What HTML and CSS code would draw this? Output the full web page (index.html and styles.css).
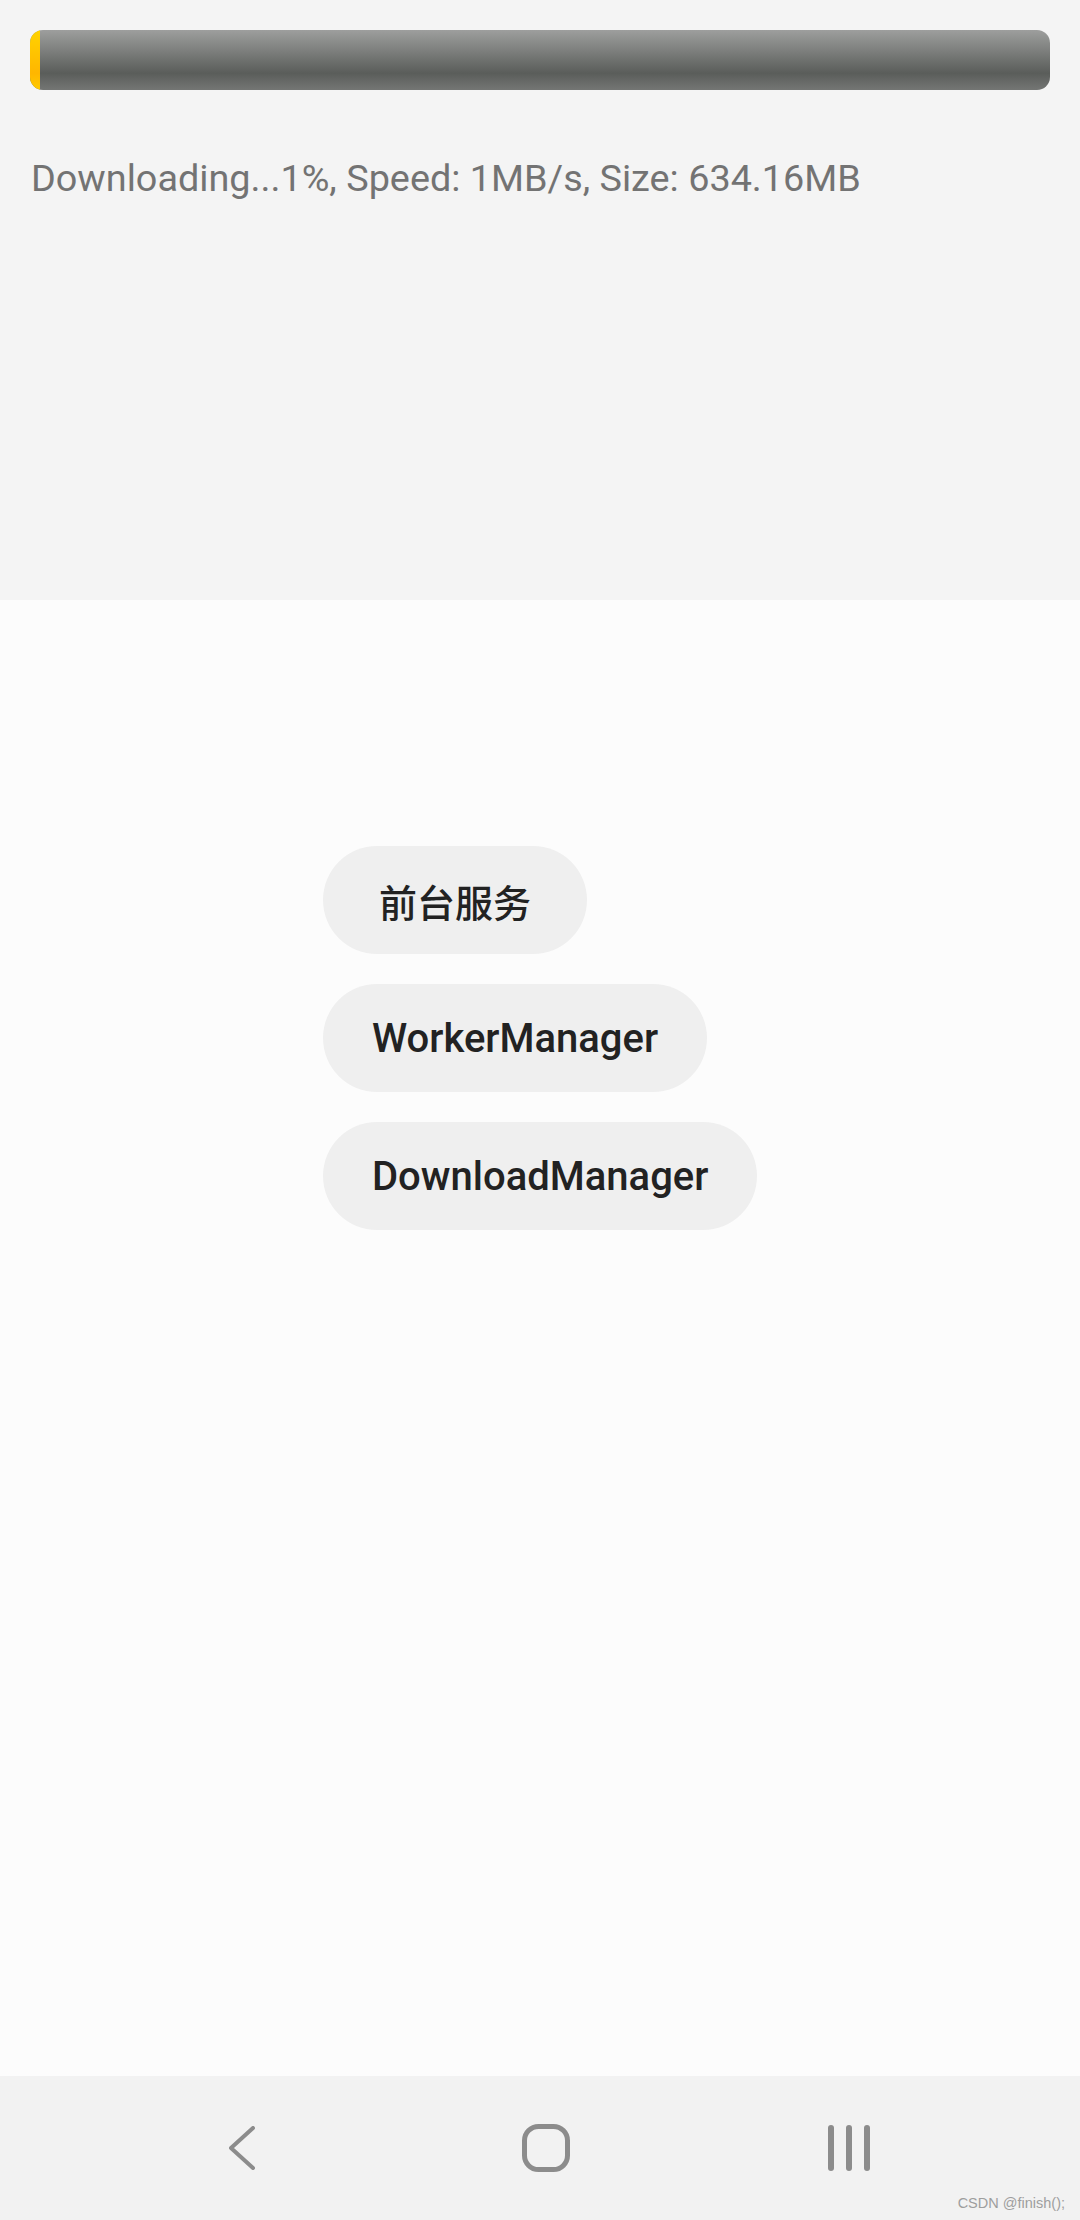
FILE: index.html
```html
<!DOCTYPE html>
<html lang="zh">
<head>
<meta charset="utf-8">
<title>Download</title>
<link rel="stylesheet" href="styles.css">
</head>
<body>
<div class="screen">
  <section class="top">
    <div class="progress"><div class="progress-fill" style="width:1%"></div></div>
    <p class="status">Downloading...1%, Speed: 1MB/s, Size: 634.16MB</p>
  </section>
  <main class="content">
    <div class="buttons">
      <button class="btn btn-cjk">前台服务</button>
      <button class="btn">WorkerManager</button>
      <button class="btn">DownloadManager</button>
    </div>
  </main>
  <nav class="navbar">
    <div class="nav-cell">
      <svg class="ic-back" width="28" height="44" viewBox="0 0 28 44"><polyline points="24,2 2,22 24,42" fill="none" stroke="#8c8c8c" stroke-width="4" stroke-linecap="round" stroke-linejoin="round"/></svg>
    </div>
    <div class="nav-cell">
      <svg class="ic-home" width="48" height="48" viewBox="0 0 48 48"><rect x="2.5" y="2.5" width="43" height="43" rx="14" fill="none" stroke="#8c8c8c" stroke-width="5"/></svg>
    </div>
    <div class="nav-cell">
      <svg class="ic-recents" width="42" height="46" viewBox="0 0 42 46"><rect x="0" y="0" width="6" height="46" rx="3" fill="#8c8c8c"/><rect x="18" y="0" width="6" height="46" rx="3" fill="#8c8c8c"/><rect x="36" y="0" width="6" height="46" rx="3" fill="#8c8c8c"/></svg>
    </div>
    <span class="watermark">CSDN @finish();</span>
  </nav>
</div>
</body>
</html>
```
FILE: styles.css
```css
html, body {
  margin: 0;
  padding: 0;
}
body {
  width: 1080px;
  height: 2220px;
  overflow: hidden;
  background: #fcfcfc;
  font-family: Roboto, "Noto Sans", "Noto Sans CJK SC", sans-serif;
}
.screen {
  width: 1080px;
  height: 2220px;
  display: flex;
  flex-direction: column;
}
.top {
  height: 600px;
  flex: none;
  box-sizing: border-box;
  background: #f4f4f4;
  padding: 30px 30px 0 30px;
}
.progress {
  height: 60px;
  border-radius: 13px;
  overflow: hidden;
  background: linear-gradient(to bottom, #9d9e9d 0%, #5a5d5a 72%, #747674 100%);
}
.progress-fill {
  height: 100%;
  background: linear-gradient(to bottom, #ffd300 0%, #ffb600 72%, #ffcb00 100%);
}
.status {
  margin: 66px 0 0 1px;
  font-family: Roboto, sans-serif;
  font-size: 37.8px;
  line-height: 44px;
  color: #737373;
  white-space: nowrap;
}
.content {
  flex: 1;
  padding: 246px 0 0 323px;
}
.buttons {
  display: flex;
  flex-direction: column;
  align-items: flex-start;
  gap: 30px;
}
.btn {
  height: 108px;
  min-width: 264px;
  box-sizing: border-box;
  padding: 0 49px;
  border: none;
  border-radius: 54px;
  background: #efefef;
  color: #222222;
  font-family: Roboto, "Noto Sans CJK SC", sans-serif;
  font-weight: 500;
  font-size: 40px;
  display: flex;
  align-items: center;
  justify-content: center;
}
.btn-cjk {
  font-size: 38px;
  font-family: "Noto Sans CJK SC", sans-serif;
}
.navbar {
  position: relative;
  flex: none;
  height: 144px;
  background: #f2f2f2;
  box-sizing: border-box;
  padding-left: 91px;
  display: grid;
  grid-template-columns: 303px 303px 303px;
  align-items: center;
}
.nav-cell {
  display: flex;
  justify-content: center;
  align-items: center;
}
.watermark {
  position: absolute;
  right: 15px;
  bottom: 9px;
  font-family: "Liberation Sans", Arial, sans-serif;
  font-size: 14.5px;
  color: #9e9e9e;
}
```
